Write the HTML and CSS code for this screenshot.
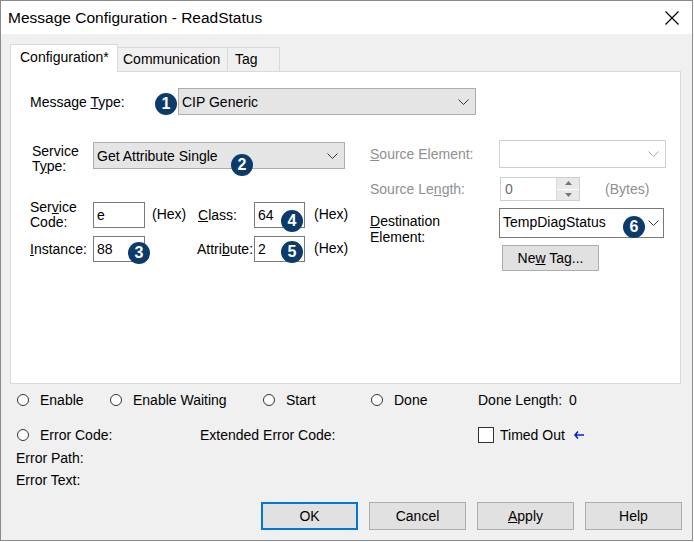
FILE: index.html
```html
<!DOCTYPE html>
<html>
<head>
<meta charset="utf-8">
<link rel="stylesheet" href="styles.css">
</head>
<body>
<div class="window">
  <div class="titlebar">
    <span class="title">Message Configuration - ReadStatus</span>
    <svg class="close" width="14" height="14" viewBox="0 0 14 14"><path d="M0.5 0.5L13.5 13.5M13.5 0.5L0.5 13.5" stroke="#000" stroke-width="1.2" fill="none"/></svg>
  </div>
  <div class="tabs">
    <div class="tab active">Configuration*</div>
    <div class="tab comm">Communication</div>
    <div class="tab tag">Tag</div>
  </div>
  <div class="panel">
    <div class="row-type">
      <div class="lbl-type">Message <u>T</u>ype:</div>
      <div class="select sel-type">
        <span class="badge b1">1</span>
        <span>CIP Generic</span>
        <svg class="chev" width="11" height="6" viewBox="0 0 11 6"><path d="M0.5 0.5L5.5 5.5L10.5 0.5" stroke="#333" fill="none"/></svg>
      </div>
    </div>
    <div class="cols">
      <div class="left">
        <div class="row-service">
          <div class="lbl2 lbl-service">Service<br>T<u>y</u>pe:</div>
          <div class="select sel-service">
            <span class="badge b2">2</span>
            <span>Get Attribute Single</span>
            <svg class="chev" width="11" height="6" viewBox="0 0 11 6"><path d="M0.5 0.5L5.5 5.5L10.5 0.5" stroke="#333" fill="none"/></svg>
          </div>
        </div>
        <div class="codegrid">
          <div class="lbl2 lbl-code">Ser<u>v</u>ice<br>Code:</div>
          <div class="input">e</div>
          <div class="hex">(Hex)</div>
          <div class="lbl"><u>C</u>lass:</div>
          <div class="input">64<span class="badge b4">4</span></div>
          <div class="hex hex2">(Hex)</div>
          <div class="lbl"><u>I</u>nstance:</div>
          <div class="input">88<span class="badge b3">3</span></div>
          <div></div>
          <div class="lbl lbl-attr">Attri<u>b</u>ute:</div>
          <div class="input">2<span class="badge b5">5</span></div>
          <div class="hex hex2">(Hex)</div>
        </div>
      </div>
      <div class="right">
        <div class="row-src">
          <div class="lbl-r dis"><u>S</u>ource Element:</div>
          <div class="select sel-src">
            <span></span>
            <svg class="chev" width="11" height="6" viewBox="0 0 11 6"><path d="M0.5 0.5L5.5 5.5L10.5 0.5" stroke="#a8a8a8" fill="none"/></svg>
          </div>
        </div>
        <div class="row-len">
          <div class="lbl-r lbl-len dis">Source Le<u>n</u>gth:</div>
          <div class="spin">
            <span class="spin-val">0</span>
            <div class="spin-btns">
              <div class="spin-btn"><svg width="7" height="4" viewBox="0 0 7 4"><path d="M0 4L3.5 0L7 4Z" fill="#777"/></svg></div>
              <div class="spin-btn"><svg width="7" height="4" viewBox="0 0 7 4"><path d="M0 0L3.5 4L7 0Z" fill="#777"/></svg></div>
            </div>
          </div>
          <span class="bytes dis">(Bytes)</span>
        </div>
        <div class="row-dest">
          <div class="lbl-r lbl-dest"><u>D</u>estination<br>Element:</div>
          <div class="select sel-dest">
            <span class="badge b6">6</span>
            <span>TempDiagStatus</span>
            <svg class="chev" width="11" height="6" viewBox="0 0 11 6"><path d="M0.5 0.5L5.5 5.5L10.5 0.5" stroke="#333" fill="none"/></svg>
          </div>
        </div>
        <div class="btn newtag"><span>Ne<u>w</u> Tag...</span></div>
      </div>
    </div>
  </div>
  <div class="status1">
    <div class="st w-enable"><span class="radio"></span>Enable</div>
    <div class="st w-wait"><span class="radio"></span>Enable Waiting</div>
    <div class="st w-start"><span class="radio"></span>Start</div>
    <div class="st w-done"><span class="radio"></span>Done</div>
    <div class="st">Done Length:<span class="zero">0</span></div>
  </div>
  <div class="status2">
    <div class="st w-err"><span class="radio"></span>Error Code:</div>
    <div class="st w-ext">Extended Error Code:</div>
    <div class="st"><span class="check"></span>Timed Out<svg class="arrow" width="10" height="8" viewBox="0 0 10 8"><path d="M4 0.5L1 4L4 7.5M1 4H10" stroke="#0a1ecc" stroke-width="1.6" fill="none"/></svg></div>
  </div>
  <div class="erow">Error Path:</div>
  <div class="erow">Error Text:</div>
  <div class="buttons">
    <div class="btn dlg ok">OK</div>
    <div class="btn dlg">Cancel</div>
    <div class="btn dlg"><span><u>A</u>pply</span></div>
    <div class="btn dlg">Help</div>
  </div>
</div>
</body>
</html>
```
FILE: styles.css
```css
* { box-sizing: border-box; }
html, body { margin: 0; padding: 0; }
body {
  width: 694px;
  height: 542px;
  overflow: hidden;
  background: #fff;
  font-family: "Liberation Sans", Arial, sans-serif;
  font-size: 14px;
  color: #000;
}
u { text-decoration: underline; text-underline-offset: 1px; }

.window {
  width: 693px;
  height: 541px;
  border: 1px solid #8a8a8a;
  background: #f0f0f0;
  display: flex;
  flex-direction: column;
}
.titlebar {
  height: 33px;
  flex: none;
  background: #fff;
  display: flex;
  align-items: center;
  justify-content: space-between;
  padding: 0 13px 0 7px;
}
.title { font-size: 15.5px; }
.close { margin-top: 1px; }

.tabs {
  display: flex;
  align-items: flex-end;
  height: 28px;
  margin: 10px 0 0 9px;
  position: relative;
  z-index: 1;
  flex: none;
}
.tab {
  height: 24px;
  margin-bottom: 1px;
  border: 1px solid #d9d9d9;
  border-bottom: none;
  background: #f0f0f0;
  line-height: 23px;
}
.tab.active {
  width: 108px;
  height: 28px;
  margin-bottom: 0;
  background: #fff;
  padding-left: 9px;
  line-height: 24px;
}
.tab.comm { width: 110px; padding-left: 5px; border-left: none; }
.tab.tag { width: 52px; padding-left: 7px; border-left: none; }

.panel {
  flex: none;
  width: 671px;
  height: 313px;
  margin: -1px 0 0 9px;
  background: #fff;
  border: 1px solid #d9d9d9;
  padding: 16px 0 0 19px;
}
.row-type { display: flex; align-items: center; height: 27px; }
.lbl-type { width: 148px; }

.select {
  position: relative;
  display: flex;
  align-items: center;
  justify-content: space-between;
  border: 1px solid #adadad;
  background: #e5e5e5;
  padding: 0 6px 0 3px;
}
.sel-type { width: 298px; height: 27px; }
.chev { flex: none; }

.badge {
  position: absolute;
  width: 22px;
  height: 22px;
  border-radius: 50%;
  background: #0c3b6b;
  color: #fff;
  font-weight: bold;
  font-size: 16px;
  line-height: 22px;
  text-align: center;
}
.b1 { left: -24px; top: 4px; }
.b2 { left: 137px; top: 11px; }
.b3 { left: 34px; top: 5px; }
.b4 { left: 26px; top: 7px; }
.b5 { left: 26px; top: 4px; }
.b6 { left: 123px; top: 7px; }

.cols { display: flex; margin-top: 25px; }
.left { width: 340px; }
.right { flex: 1; }

.row-service { display: flex; align-items: flex-start; margin-top: 2px; height: 27px; }
.lbl2 { line-height: 15px; }
.lbl-service { width: 63px; padding-left: 2px; margin-top: 2px; line-height: 15px; }
.sel-service { width: 252px; height: 27px; }

.codegrid {
  display: grid;
  grid-template-columns: 63px 52px 53px 56px 51px auto;
  grid-template-rows: 26px 26px;
  row-gap: 8px;
  align-items: center;
  margin-top: 33px;
}
.input {
  position: relative;
  height: 26px;
  border: 1px solid #7a7a7a;
  background: #fff;
  padding-left: 3px;
  line-height: 24px;
}
.hex { padding-left: 7px; margin-top: -3px; }
.hex2 { padding-left: 9px; }
.lbl-attr { margin-left: -1px; }

.dis { color: #8f8f8f; }
.row-src { display: flex; align-items: center; height: 28px; }
.lbl-r { width: 129px; flex: none; }
.sel-src { width: 167px; height: 28px; background: #fff; border-color: #cfcfcf; }
.row-len { display: flex; align-items: center; height: 24px; margin-top: 9px; }
.lbl-len { width: 130px; }
.spin {
  width: 80px;
  height: 24px;
  border: 1px solid #cfcfcf;
  background: #fff;
  display: flex;
  justify-content: space-between;
}
.spin-val { padding-left: 4px; line-height: 22px; color: #6d6d6d; }
.spin-btns { width: 23px; display: flex; flex-direction: column; border-left: 1px solid #dadada; }
.spin-btn {
  flex: 1;
  background: #e9e9e9;
  display: flex;
  align-items: center;
  justify-content: center;
}
.spin-btn + .spin-btn { border-top: 1px solid #fff; }
.bytes { margin-left: 25px; }
.row-dest { display: flex; align-items: flex-start; height: 30px; margin-top: 7px; }
.lbl-dest { line-height: 16px; margin-top: 5px; }
.sel-dest { width: 165px; height: 30px; background: #fff; border-color: #7a7a7a; padding-right: 4px; }
.sel-dest > span:nth-child(2) { margin-top: -3px; }

.btn {
  display: flex;
  align-items: center;
  justify-content: center;
  background: #e1e1e1;
  border: 1px solid #adadad;
}
.newtag { width: 97px; height: 26px; margin: 7px 0 0 132px; }

.status1, .status2 { display: flex; align-items: center; height: 24px; padding-left: 16px; flex: none; }
.status1 { margin-top: 4px; }
.status2 { margin-top: 11px; }
.st { display: flex; align-items: center; }
.radio {
  width: 12px;
  height: 12px;
  border: 1.5px solid #333;
  border-radius: 50%;
  background: #fff;
  margin-right: 11px;
  flex: none;
}
.w-enable { width: 93px; }
.w-wait { width: 153px; }
.w-start { width: 108px; }
.w-done { width: 107px; }
.zero { margin-left: 7px; }
.w-err { width: 183px; }
.w-ext { width: 278px; }
.check {
  width: 16px;
  height: 16px;
  border: 1px solid #333;
  background: #fff;
  margin-right: 6px;
}
.arrow { margin-left: 9px; }
.erow { height: 22px; line-height: 22px; padding-left: 15px; flex: none; }
.buttons {
  display: flex;
  justify-content: flex-end;
  gap: 11px;
  margin-top: 11px;
  padding-right: 10px;
  flex: none;
}
.dlg { width: 97px; height: 28px; }
.ok { border: 2px solid #0078d7; }
```
